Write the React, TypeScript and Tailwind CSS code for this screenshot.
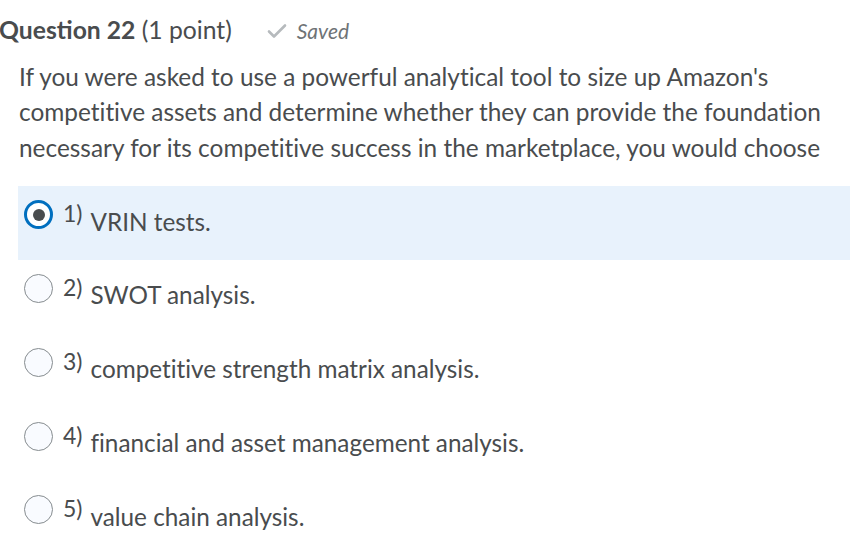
import React from "react";

const options = [
  "VRIN tests.",
  "SWOT analysis.",
  "competitive strength matrix analysis.",
  "financial and asset management analysis.",
  "value chain analysis.",
];

function Radio({ checked }: { checked: boolean }) {
  if (checked) {
    return (
      <span className="mt-[-16px] flex h-[29px] w-[29px] shrink-0 items-center justify-center rounded-full border-[3px] border-[#006fbf] bg-white">
        <span className="h-[12px] w-[12px] rounded-full bg-[#494c4e]" />
      </span>
    );
  }
  return (
    <span className="mt-[-16px] block h-[29px] w-[29px] shrink-0 rounded-full border border-[#868c8f] bg-[#f9fbff]" />
  );
}

export default function App() {
  return (
    <div className="h-[559px] w-[850px] overflow-hidden bg-white text-[#494c4e]" style={{ fontFamily: "Lato, 'Noto Sans', sans-serif" }}>
      <div className="flex items-baseline pt-[14px]">
        <h2 className="ml-[-1px] text-[24.7px] leading-[32px]">
          <span className="font-bold">Question 22</span>{" "}
          <span className="font-normal">(1 point)</span>
        </h2>
        <span className="ml-[35px] flex items-baseline text-[#6e7376]">
          <svg width="20" height="16" viewBox="0 0 20 16" className="mr-[10px] self-center" fill="none">
            <path d="M2 8.5 L7 13.5 L18 2.5" stroke="#b6babd" strokeWidth="2.6" strokeLinecap="round" strokeLinejoin="round" />
          </svg>
          <span className="text-[21px] italic">Saved</span>
        </span>
      </div>
      <p className="ml-[19px] mt-[12px] w-[828px] text-[24.4px] leading-[35.5px] [font-variant-ligatures:none]">
        If you were asked to use a powerful analytical tool to size up Amazon's competitive assets and determine whether they can provide the foundation necessary for its competitive success in the marketplace, you would choose
      </p>
      <div className="mt-[21px] ml-[18px] flex flex-col [font-variant-ligatures:none]">
        {options.map((o, i) => (
          <div
            key={i}
            className={
              "flex h-[73.75px] items-center pl-[6px] " +
              (i === 0 ? "bg-[#e8f2fc]" : "bg-white")
            }
          >
            <Radio checked={i === 0} />
            <span className="ml-[10px] mt-[-18px] text-[23px] leading-none">{i + 1})</span>
            <span className="ml-[8px] mt-[-2px] text-[24.3px] leading-none">{o}</span>
          </div>
        ))}
      </div>
    </div>
  );
}
